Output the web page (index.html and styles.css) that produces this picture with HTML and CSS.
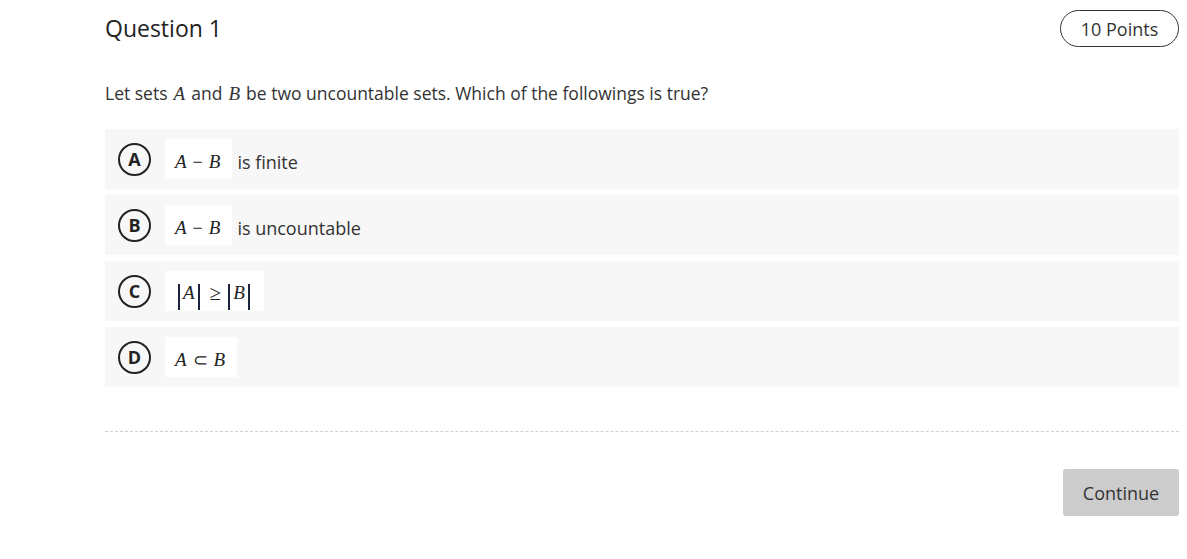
FILE: index.html
```html
<!DOCTYPE html>
<html lang="en">
<head>
    <meta charset="UTF-8">
    <meta name="viewport" content="width=device-width, initial-scale=1.0">
    <title>Question 1</title>
    <link rel="stylesheet" href="styles.css">
</head>
<body>
    <div class="quiz">
        <div class="quiz-header">
            <h1 class="title">Question 1</h1>
            <span class="points">10 Points</span>
        </div>
        <p class="question">Let sets <span class="math">A</span> and <span class="math">B</span> be two uncountable sets. Which of the followings is true?</p>

        <div class="options">
            <div class="option">
                <span class="letter">A</span>
                <span class="formula"><span class="math">A</span><span class="op">−</span><span class="math">B</span></span>
                <span class="label">is finite</span>
            </div>
            <div class="option">
                <span class="letter">B</span>
                <span class="formula"><span class="math">A</span><span class="op">−</span><span class="math">B</span></span>
                <span class="label">is uncountable</span>
            </div>
            <div class="option">
                <span class="letter">C</span>
                <span class="formula abs"><span class="bar"></span><span class="math">A</span><span class="bar"></span><span class="op">≥</span><span class="bar"></span><span class="math">B</span><span class="bar"></span></span>
            </div>
            <div class="option">
                <span class="letter">D</span>
                <span class="formula"><span class="math">A</span><span class="op">⊂</span><span class="math">B</span></span>
            </div>
        </div>

        <div class="divider"></div>

        <div class="actions">
            <button class="button continue">Continue</button>
        </div>
    </div>
</body>
</html>
```

FILE: styles.css
```css
body {
    font-family: 'Open Sans', 'Liberation Sans', sans-serif;
    color: #333;
    margin: 0;
    background: #fff;
}
.quiz {
    margin: 0 8px 0 105px;
    padding-top: 10px;
}
.quiz-header {
    display: flex;
    justify-content: space-between;
    align-items: center;
    height: 37px;
}
.title {
    font-size: 23px;
    font-weight: normal;
    color: #222;
    margin: 0;
    position: relative;
    top: -1px;
}
.points {
    box-sizing: border-box;
    height: 37px;
    width: 119px;
    border: 1px solid #333;
    border-radius: 19px;
    display: flex;
    align-items: center;
    justify-content: center;
    font-size: 18px;
    color: #333;
}
.question {
    font-size: 17.5px;
    line-height: 22px;
    margin: 35px 0 24px 0;
}
.question .math {
    margin: 0 1.5px;
}
.math {
    font-family: 'Liberation Serif', 'Times New Roman', serif;
    font-style: italic;
    font-size: 19px;
}
.options {
    display: flex;
    flex-direction: column;
    gap: 6px;
}
.option {
    background: #f7f7f7;
    height: 60px;
    display: flex;
    align-items: center;
    padding-left: 13px;
}
.letter {
    box-sizing: border-box;
    width: 33px;
    height: 33px;
    border: 2px solid #222;
    border-radius: 50%;
    display: flex;
    align-items: center;
    justify-content: center;
    font-weight: bold;
    font-size: 18px;
    color: #222;
    margin-right: 14px;
}
.formula {
    box-sizing: border-box;
    background: #fff;
    height: 40px;
    display: flex;
    align-items: center;
    padding: 6px 12px 0 10px;
    color: #222;
}
.op {
    font-family: 'Liberation Serif', 'Times New Roman', serif;
    font-size: 18px;
    margin: 0 6px;
}
.formula.abs {
    padding: 4px 14px 0 13px;
}
.formula.abs .math {
    margin: 0 3px;
}
.formula.abs .op {
    font-size: 21px;
    margin: 0 7px 0 10px;
}
.bar {
    display: inline-block;
    width: 2px;
    height: 26px;
    background: #1d2440;
    position: relative;
    top: 4px;
}
.label {
    font-size: 18px;
    margin-left: 5px;
    position: relative;
    top: 3px;
}
.divider {
    margin-top: 44px;
    border-top: 1px dashed #cfcfcf;
}
.actions {
    display: flex;
    justify-content: flex-end;
    margin-top: 37px;
}
.button.continue {
    font-family: 'Open Sans', 'Liberation Sans', sans-serif;
    background: #ccc;
    color: #333;
    border: none;
    border-radius: 3px;
    width: 116px;
    height: 47px;
    font-size: 18px;
}
```
